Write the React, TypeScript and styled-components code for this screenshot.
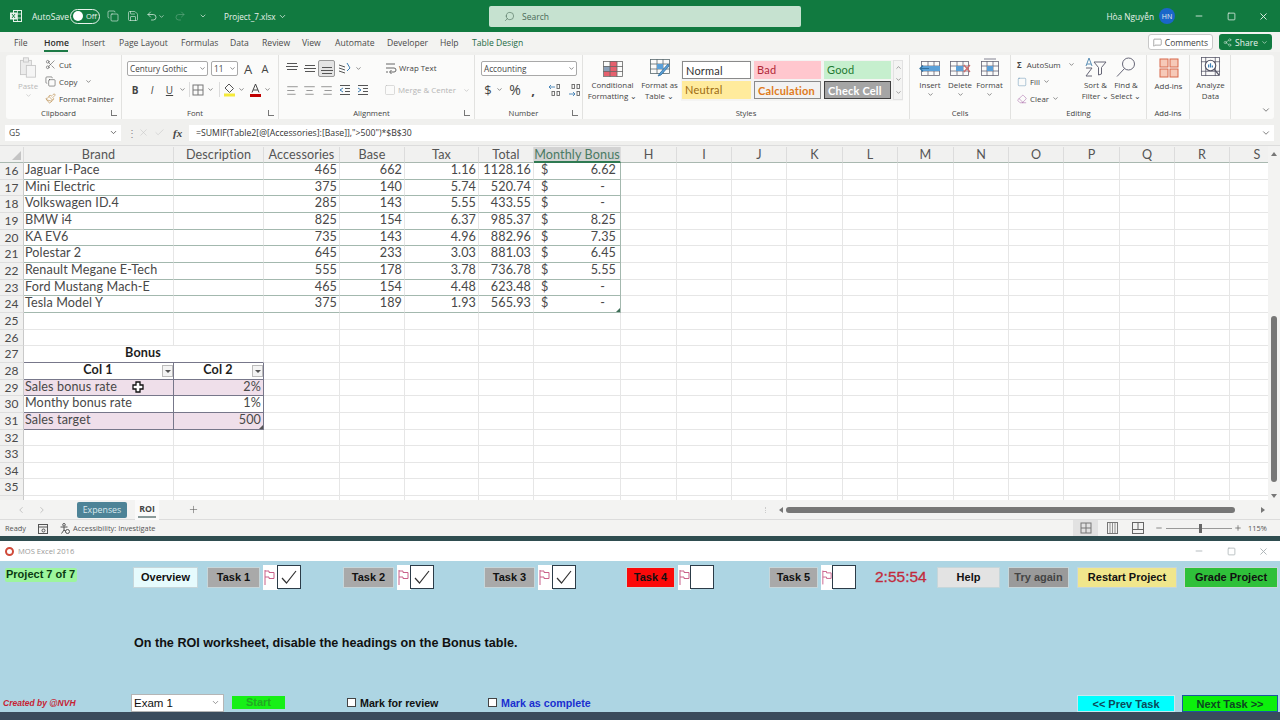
import React from 'react';
import styled, { createGlobalStyle } from 'styled-components';
import {
  AlignCenter,
  AlignLeft,
  AlignRight,
  Check,
  ChevronDown,
  ChevronLeft,
  ChevronRight,
  Copy,
  Eraser,
  MessageSquare,
  Minus,
  Paintbrush,
  Plus,
  Redo2,
  Save,
  Scissors,
  Search,
  Share2,
  Square,
  Undo2,
  X,
} from 'lucide-react';

const ui = '"Open Sans", "Noto Sans", sans-serif';
const sheetFont = 'Lato, "Open Sans", sans-serif';
const arial = '"Liberation Sans", Arial, sans-serif';

const GlobalStyle = createGlobalStyle`
  html, body { margin: 0; padding: 0; background: #fff; }
  * { box-sizing: border-box; }
`;

const Page = styled.div`
  width: 1280px;
  height: 720px;
  overflow: hidden;
  display: flex;
  flex-direction: column;
  font-family: ${ui};
  color: #444;
`;

/* title bar */
const TitleBar = styled.div`
  height: 32px;
  flex: none;
  background: #117a40;
  color: #e8f3ec;
  display: flex;
  align-items: center;
  font-size: 8.5px;
  padding-left: 10px;
`;
const AutoSave = styled.span`
  margin-left: 10px;
  width: 38px;
`;
const Toggle = styled.span`
  width: 30px;
  height: 15px;
  border: 1px solid #e8f3ec;
  border-radius: 8px;
  display: flex;
  align-items: center;
  padding-left: 2px;
  gap: 3px;
  font-size: 7.5px;
  &::before {
    content: '';
    width: 10px;
    height: 10px;
    background: #fff;
    border-radius: 50%;
  }
`;
const QatSlot = styled.span<{ $w: number; $dim?: boolean }>`
  width: ${p => p.$w}px;
  flex: none;
  display: flex;
  justify-content: center;
  align-items: center;
  opacity: ${p => (p.$dim ? 0.4 : 1)};
  svg {
    flex: none;
  }
`;
const FileName = styled.span`
  margin-left: 8px;
  width: 265px;
  display: flex;
  align-items: center;
  gap: 2px;
  font-size: 8.2px;
`;
const SearchBox = styled.div`
  width: 312px;
  height: 21px;
  background: #c6e2d0;
  border-radius: 2px;
  color: #4a6a58;
  display: flex;
  align-items: center;
  gap: 7px;
  padding-left: 15px;
  font-size: 8.5px;
`;
const UserName = styled.span`
  margin-left: auto;
  font-size: 8.3px;
`;
const Avatar = styled.span`
  width: 16px;
  height: 16px;
  margin-left: 5px;
  border-radius: 50%;
  background: #1a66c9;
  font-size: 7px;
  display: flex;
  align-items: center;
  justify-content: center;
`;
const WinBtns = styled.span<{ $dark?: boolean }>`
  display: flex;
  align-items: center;
  width: 105px;
  justify-content: space-between;
  padding: 0 11px 0 19px;
  margin-left: ${p => (p.$dark ? 'auto' : '0')};
  color: ${p => (p.$dark ? '#a8b0b3' : '#e8f3ec')};
`;

/* tabs */
const TabBar = styled.div`
  height: 20px;
  flex: none;
  background: #f3f3f1;
  display: flex;
  align-items: center;
  padding-left: 14px;
  font-size: 8.6px;
`;
const Tab = styled.span<{ $active?: boolean; $green?: boolean; $w: number }>`
  width: ${p => p.$w}px;
  height: 20px;
  line-height: 22px;
  position: relative;
  color: ${p => (p.$green ? '#1d6b44' : p.$active ? '#2b2b2b' : '#4a4a4a')};
  font-weight: ${p => (p.$active ? 600 : 400)};
  &::after {
    content: '';
    display: ${p => (p.$active ? 'block' : 'none')};
    position: absolute;
    left: 0;
    bottom: 0;
    width: 24px;
    height: 2px;
    background: #1d7a46;
  }
`;
const CommentsBtn = styled.span`
  margin-left: auto;
  width: 65px;
  height: 16px;
  background: #fff;
  border: 1px solid #c8c8c8;
  border-radius: 3px;
  display: flex;
  align-items: center;
  justify-content: center;
  gap: 3px;
  font-size: 8.5px;
`;
const ShareBtn = styled.span`
  margin: 0 8px 0 6px;
  width: 53px;
  height: 16px;
  background: #117a40;
  color: #e8f3ec;
  border-radius: 3px;
  display: flex;
  align-items: center;
  justify-content: center;
  gap: 3px;
  font-size: 8.5px;
`;

/* ribbon */
const Ribbon = styled.div`
  height: 70px;
  flex: none;
  background: #f0f0ee;
  padding: 3px 6px 3px 6px;
`;
const RibbonCard = styled.div`
  height: 64px;
  background: #fbfbfa;
  border-radius: 3px;
  display: flex;
  position: relative;
`;
const Group = styled.div<{ $w: number; $plain?: boolean }>`
  width: ${p => p.$w}px;
  flex: none;
  display: flex;
  flex-direction: column;
  position: relative;
  border-right: ${p => (p.$plain ? 'none' : '1px solid #e2e2e0')};
`;
const GroupBody = styled.div<{ $pl?: number }>`
  height: 52px;
  display: flex;
  padding-left: ${p => p.$pl ?? 0}px;
`;
const GroupLabel = styled.div<{ $launcher?: boolean }>`
  font-size: 7.7px;
  text-align: center;
  line-height: 12px;
  padding-right: ${p => (p.$launcher ? 10 : 0)}px;
`;
const Launcher = styled.span`
  position: absolute;
  right: 4px;
  bottom: 3px;
  width: 6px;
  height: 6px;
  border-left: 1px solid #777;
  border-bottom: 1px solid #777;
`;
const Stack = styled.div<{ $w?: number; $gap?: number; $pt?: number }>`
  display: flex;
  flex-direction: column;
  width: ${p => (p.$w ? `${p.$w}px` : 'auto')};
  gap: ${p => p.$gap ?? 0}px;
  padding-top: ${p => p.$pt ?? 0}px;
`;
const SmallCmd = styled.div<{ $dim?: boolean }>`
  height: 17.5px;
  display: flex;
  align-items: center;
  gap: 3px;
  font-size: 7.9px;
  white-space: nowrap;
  color: ${p => (p.$dim ? '#b5b5b5' : '#444')};
  svg {
    flex: none;
  }
`;
const ToolRow = styled.div<{ $h?: number; $gap?: number }>`
  display: flex;
  align-items: center;
  height: ${p => p.$h ?? 21}px;
  gap: ${p => p.$gap ?? 0}px;
`;
const ToolIcon = styled.span<{ $w: number; $sel?: boolean; $fs?: number }>`
  width: ${p => p.$w}px;
  height: 17px;
  flex: none;
  display: flex;
  align-items: center;
  justify-content: center;
  font-size: ${p => p.$fs ?? 10}px;
  border: ${p => (p.$sel ? '1px solid #999' : 'none')};
  border-radius: 2px;
  background: ${p => (p.$sel ? '#e4e4e4' : 'transparent')};
`;
const ToolSep = styled.span<{ $ml?: number; $mr?: number }>`
  width: 1px;
  height: 15px;
  flex: none;
  margin: 0 ${p => p.$mr ?? 0}px 0 ${p => p.$ml ?? 0}px;
  background: #dcdcdc;
`;
const Combo = styled.div<{ $w: number }>`
  width: ${p => p.$w}px;
  height: 15px;
  background: #fff;
  border: 1px solid #a9a9a9;
  border-radius: 2px;
  font-size: 8.2px;
  padding: 0 1px 0 2px;
  display: flex;
  align-items: center;
  justify-content: space-between;
`;
const BigCmd = styled.div<{ $w: number; $dim?: boolean; $pt?: number }>`
  width: ${p => p.$w}px;
  flex: none;
  display: flex;
  flex-direction: column;
  align-items: center;
  font-size: 7.9px;
  line-height: 11px;
  text-align: center;
  white-space: nowrap;
  padding-top: ${p => p.$pt ?? 5}px;
  color: ${p => (p.$dim ? '#b9b9b9' : '#444')};
  svg {
    flex: none;
  }
  svg:first-child {
    margin-bottom: 3px;
  }
`;
const Gallery = styled.div`
  width: 222px;
  height: 41px;
  margin-top: 5px;
  margin-left: 4px;
  background: #f4f4f3;
  display: grid;
  grid-template-columns: 72px 70px 70px 10px;
  grid-template-rows: 20px 20px;
  column-gap: 0;
`;
const StyleChip = styled.div<{ $bg: string; $fg: string; $bd?: string; $bold?: boolean }>`
  margin: 1px 2px 1px 1px;
  background: ${p => p.$bg};
  color: ${p => p.$fg};
  border: ${p => (p.$bd ? `1px solid ${p.$bd}` : 'none')};
  font-size: 11px;
  font-weight: ${p => (p.$bold ? 700 : 400)};
  line-height: 17px;
  padding-left: 3px;
  letter-spacing: 0.2px;
  font-family: ${sheetFont};
  white-space: nowrap;
  overflow: hidden;
`;
const GalleryArrows = styled.div`
  grid-column: 4;
  grid-row: 1 / span 2;
  display: flex;
  flex-direction: column;
  justify-content: space-around;
  align-items: center;
  border: 1px solid #e2e2e2;
  color: #666;
`;
const RibbonCollapse = styled.span`
  position: absolute;
  right: 3px;
  bottom: 4px;
  color: #666;
  display: flex;
`;

/* formula bar */
const FormulaBar = styled.div`
  height: 24px;
  flex: none;
  background: #f0f0ee;
  display: flex;
  align-items: center;
  padding: 0 6px 2px 5px;
  border-bottom: 1px solid #dcdcdc;
`;
const NameBox = styled.div`
  width: 116px;
  height: 16px;
  background: #fff;
  display: flex;
  align-items: center;
  justify-content: space-between;
  padding: 0 3px 0 4px;
  font-size: 8.5px;
`;
const FormulaBtns = styled.div`
  width: 68px;
  display: flex;
  align-items: center;
  padding-left: 6px;
  gap: 5px;
  color: #c4c4c4;
`;
const Dots = styled.span`
  width: 6px;
  font-size: 10px;
  color: #888;
`;
const Fx = styled.span`
  font-family: "Liberation Serif", serif;
  font-style: italic;
  font-weight: 700;
  font-size: 11px;
  color: #444;
  margin-left: 3px;
`;
const FormulaInput = styled.div`
  flex: 1;
  height: 16px;
  background: #fff;
  display: flex;
  align-items: center;
  justify-content: space-between;
  padding: 0 3px 0 7px;
  font-size: 8.7px;
  color: #333;
`;

/* sheet */
const COLS = [24, 150, 90, 76, 65, 74, 55, 87, 56, 55, 55, 56, 55, 56, 55, 55, 56, 55, 55, 55];
const TEMPLATE = COLS.map(c => `${c}px`).join(' ');
const LETTERS = ['H', 'I', 'J', 'K', 'L', 'M', 'N', 'O', 'P', 'Q', 'R', 'S'];

const SheetArea = styled.div`
  height: 354px;
  flex: none;
  display: flex;
  background: #fff;
  overflow: hidden;
`;
const Grid = styled.div`
  width: 1268px;
  flex: none;
  overflow: hidden;
  font-family: ${sheetFont};
  font-size: 12.6px;
  letter-spacing: 0.12px;
  color: #484848;
`;
const Row = styled.div<{ $head?: boolean }>`
  display: grid;
  grid-template-columns: ${TEMPLATE};
  height: ${p => (p.$head ? '17px' : '16.67px')};
  ${p => (p.$head ? 'padding-top: 1px; background: #f1f1f0;' : '')}
`;
const HeadCell = styled.div<{ $sel?: boolean }>`
  text-align: center;
  line-height: 15px;
  color: ${p => (p.$sel ? '#4a7a63' : '#555')};
  background: ${p => (p.$sel ? '#d3d3d3' : '#f1f1f0')};
  border-right: 1px solid #dcdcdc;
  border-bottom: ${p => (p.$sel ? '2px solid #2f7a52' : '1px solid #a9b8b0')};
  white-space: nowrap;
  overflow: hidden;
`;
const Corner = styled(HeadCell)`
  position: relative;
  &::after {
    content: '';
    position: absolute;
    right: 2px;
    bottom: 2px;
    border-left: 9px solid transparent;
    border-bottom: 9px solid #c4c4c4;
  }
`;
const RowNo = styled.div`
  background: #f1f1f0;
  text-align: center;
  line-height: 15.5px;
  color: #4a4a4a;
  border-right: 1px solid #c9c9c9;
  border-bottom: 1px solid #dedede;
  font-size: 12px;
`;
const Cell = styled.div<{
  $right?: boolean;
  $line?: string;
  $fill?: string;
  $bold?: boolean;
  $center?: boolean;
  $span?: number;
  $edge?: string;
}>`
  position: relative;
  line-height: 14.5px;
  padding: 0 2px 0 1px;
  white-space: nowrap;
  text-align: ${p => (p.$center ? 'center' : p.$right ? 'right' : 'left')};
  font-weight: ${p => (p.$bold ? 700 : 400)};
  color: ${p => (p.$bold ? '#1d1d1d' : 'inherit')};
  background: ${p => p.$fill ?? 'transparent'};
  border-bottom: 1px solid ${p => p.$line ?? '#e6e6e6'};
  border-right: 1px solid ${p => p.$edge ?? '#e6e6e6'};
  ${p => (p.$span ? `grid-column: span ${p.$span};` : '')}
`;
const Accounting = styled(Cell)`
  display: flex;
  justify-content: space-between;
  padding: 0 4px 0 7px;
`;
const DashValue = styled.span`
  padding-right: 11px;
`;
const ResizeGrip = styled.span<{ $color: string }>`
  position: absolute;
  right: 0;
  bottom: 0;
  border-left: 4px solid transparent;
  border-bottom: 4px solid ${p => p.$color};
`;
const FilterBtn = styled.span`
  position: absolute;
  right: 0;
  top: 2px;
  width: 11px;
  height: 12px;
  background: #f4f4f4;
  border: 1px solid #bbb;
  &::after {
    content: '';
    position: absolute;
    left: 2px;
    top: 4px;
    border-left: 3px solid transparent;
    border-right: 3px solid transparent;
    border-top: 3px solid #555;
  }
`;
const Pointer = styled.svg`
  position: absolute;
  left: 108px;
  top: 1px;
`;
const VScroll = styled.div`
  flex: 1;
  background: #f3f3f2;
  display: flex;
  flex-direction: column;
  align-items: center;
  padding-top: 6px;
  color: #666;
`;
const ArrowUp = styled.span`
  border-left: 3px solid transparent;
  border-right: 3px solid transparent;
  border-bottom: 4px solid #777;
`;
const ArrowDown = styled.span`
  margin-top: 12px;
  border-left: 3px solid transparent;
  border-right: 3px solid transparent;
  border-top: 4px solid #777;
`;
const VThumb = styled.div`
  width: 6px;
  height: 166px;
  margin-top: 160px;
  background: #777;
  border-radius: 3px;
`;

/* sheet tabs */
const SheetTabs = styled.div`
  height: 20px;
  flex: none;
  background: #f3f3f2;
  display: flex;
  align-items: center;
  font-size: 8.8px;
  border-bottom: 1px solid #dcdcdc;
  color: #bbb;
  padding-left: 16px;
`;
const TabNav = styled.span`
  width: 21px;
  display: flex;
`;
const ExpensesTab = styled.span`
  margin-left: 19px;
  width: 50px;
  height: 16px;
  background: #4d8397;
  color: #dbe9ee;
  border-radius: 2px;
  display: flex;
  align-items: center;
  justify-content: center;
`;
const RoiTab = styled.span`
  margin-left: 8px;
  width: 24px;
  height: 20px;
  background: #fafafa;
  color: #444;
  font-weight: 700;
  text-align: center;
  line-height: 18px;
  position: relative;
  &::after {
    content: '';
    position: absolute;
    left: 3px;
    right: 3px;
    bottom: 2px;
    height: 2px;
    background: #8a9a9a;
  }
`;
const AddTab = styled.span`
  margin-left: 29px;
  color: #555;
  display: flex;
  width: 577px;
`;
const HScroll = styled.div`
  flex: 1;
  display: flex;
  align-items: center;
  border-left: 1px dotted #ccc;
  padding: 0 15px 0 13px;
  gap: 3px;
`;
const HArrow = styled.span<{ $right?: boolean }>`
  border-top: 3px solid transparent;
  border-bottom: 3px solid transparent;
  ${p => (p.$right ? 'border-left: 4px solid #777; margin-left: 23px;' : 'border-right: 4px solid #777;')}
`;
const HThumb = styled.span`
  flex: 1;
  height: 6px;
  background: #777;
  border-radius: 3px;
`;

/* status bar */
const StatusBar = styled.div`
  height: 16px;
  flex: none;
  background: #f3f3f2;
  display: flex;
  align-items: center;
  font-size: 7.4px;
  padding-left: 5px;
  color: #555;
  svg {
    flex: none;
  }
`;
const StatusText = styled.span<{ $w: number }>`
  width: ${p => p.$w}px;
  display: flex;
  align-items: center;
  gap: 3px;
`;
const ViewBtn = styled.span<{ $sel?: boolean; $ml?: number }>`
  width: 25px;
  height: 16px;
  margin-left: ${p => p.$ml ?? 0}px;
  display: flex;
  align-items: center;
  justify-content: center;
  background: ${p => (p.$sel ? '#e2e2e2' : 'transparent')};
`;
const ZoomOut = styled.span`
  margin-left: 5px;
  display: flex;
`;
const ZoomIn = styled.span`
  margin-left: 2px;
  display: flex;
`;
const ZoomSlider = styled.span`
  margin-left: 3px;
  width: 66px;
  height: 1px;
  background: #999;
  position: relative;
  &::after {
    content: '';
    position: absolute;
    left: 33px;
    top: -4px;
    width: 3px;
    height: 9px;
    background: #666;
  }
`;
const ZoomPct = styled.span`
  margin-left: 6px;
`;
const DarkStrip = styled.div<{ $h: number; $c: string }>`
  height: ${p => p.$h}px;
  flex: none;
  background: ${p => p.$c};
`;

/* exam panel */
const ExamTitle = styled.div`
  height: 20px;
  flex: none;
  background: #fff;
  display: flex;
  align-items: center;
  font-size: 7.6px;
  color: #9a9a9a;
  padding-left: 5px;
  gap: 4px;
`;
const ExamLogo = styled.span`
  width: 9px;
  height: 9px;
  border: 2px solid #d04a3a;
  border-radius: 50%;
`;
const ExamPanel = styled.div`
  flex: 1;
  background: #add5e3;
  display: flex;
  flex-direction: column;
  font-family: ${arial};
  font-weight: 700;
  color: #111;
  font-size: 11px;
`;
const TopRow = styled.div`
  height: 31px;
  display: flex;
  align-items: flex-start;
  padding-top: 4px;
`;
const ProjectTag = styled.div`
  width: 72px;
  height: 14px;
  margin: 3px 0 0 5px;
  background: #9df59d;
  color: #0b3b12;
  line-height: 13px;
  padding-left: 1px;
  white-space: nowrap;
  border-radius: 2px;
`;
const PanelBtn = styled.div<{ $w: number; $ml: number; $bg: string; $fg?: string; $mt?: number; $h?: number }>`
  width: ${p => p.$w}px;
  height: ${p => p.$h ?? 21}px;
  margin-left: ${p => p.$ml}px;
  margin-top: ${p => p.$mt ?? 2}px;
  padding-bottom: 2px;
  flex: none;
  background: ${p => p.$bg};
  color: ${p => p.$fg ?? '#111'};
  border: 1.5px solid #c6d6da;
  display: flex;
  align-items: center;
  justify-content: center;
  white-space: nowrap;
`;
const FlagBox = styled.div<{ $w: number }>`
  width: ${p => p.$w}px;
  height: 25px;
  margin-left: 3px;
  flex: none;
  background: #fff;
  display: flex;
  align-items: center;
`;
const CheckBox = styled.div`
  width: 24px;
  height: 24px;
  flex: none;
  background: #fff;
  border: 1.5px solid #2c3c48;
  margin-left: -1px;
  display: flex;
  align-items: center;
  justify-content: center;
  color: #333;
`;
const Timer = styled.div`
  margin-left: 19px;
  width: 53px;
  margin-top: 3px;
  color: #c22a3c;
  font-size: 15.5px;
  font-weight: 400;
  -webkit-text-stroke: 0.3px #c22a3c;
  white-space: nowrap;
`;
const Instruction = styled.div`
  margin: 42px 0 0 134px;
  height: 18px;
  font-size: 12.6px;
  line-height: 18px;
  white-space: nowrap;
`;
const FooterRow = styled.div`
  margin-top: auto;
  height: 19px;
  display: flex;
  align-items: center;
`;
const Credit = styled.span`
  width: 131px;
  padding-left: 3px;
  font-size: 8.5px;
  font-style: italic;
  color: #c62333;
`;
const ExamSelect = styled.div`
  width: 93px;
  height: 18px;
  background: #fff;
  border: 1px solid #b5b5b5;
  display: flex;
  align-items: center;
  justify-content: space-between;
  padding: 0 3px 0 2px;
  font-weight: 400;
  font-size: 11.5px;
  color: #111;
`;
const StartBtn = styled.div`
  margin-left: 8px;
  width: 53px;
  height: 13px;
  background: #17f017;
  color: #23a823;
  text-align: center;
  line-height: 13px;
`;
const MarkBox = styled.span`
  width: 9px;
  height: 9px;
  flex: none;
  background: #fff;
  border: 1px solid #444;
  margin-right: 4px;
`;
const Mark = styled.span<{ $ml: number; $w: number; $blue?: boolean }>`
  margin-left: ${p => p.$ml}px;
  width: ${p => p.$w}px;
  display: flex;
  align-items: center;
  white-space: nowrap;
  color: ${p => (p.$blue ? '#1a2fd0' : '#111')};
  font-size: 10.7px;
`;
const NavBtn = styled.div<{ $ml: number; $w: number; $bg: string; $bd: string; $fg: string }>`
  margin-left: ${p => p.$ml}px;
  width: ${p => p.$w}px;
  height: 17px;
  margin-top: 2px;
  background: ${p => p.$bg};
  border: 1px solid ${p => p.$bd};
  color: ${p => p.$fg};
  text-align: center;
  line-height: 16px;
`;

const ExcelIcon = () => (
  <svg width="12" height="12" viewBox="0 0 12 12" fill="none">
    <rect x="3.5" y="0.5" width="8" height="11" stroke="#e8f3ec" />
    <path d="M7.5 1v10M4 4h7M4 8h7" stroke="#e8f3ec" strokeWidth="0.8" />
    <rect x="0" y="2.5" width="7" height="7" fill="#e8f3ec" />
    <path d="M2 4l3 4M5 4L2 8" stroke="#117a40" strokeWidth="0.9" />
  </svg>
);

const Hamburger = ({ rows }: { rows: Array<[number, number]> }) => (
  <svg width="14" height="14" viewBox="0 0 14 14" fill="none" stroke="#555" strokeWidth="1">
    {rows.map(([x, y]) => (
      <path key={y} d={`M${x} ${y + 0.5}h${14 - 2 * x}`} />
    ))}
  </svg>
);

const IndentIcon = ({ flip }: { flip?: boolean }) => (
  <svg width="14" height="14" viewBox="0 0 14 14" fill="none" stroke="#555" strokeWidth="1">
    <path d="M2 2.5h10M7 5.5h5M7 8.5h5M2 11.5h10" />
    <path d={flip ? 'M5 5L2 7l3 2' : 'M2 5l3 2-3 2'} stroke="#3f7fb5" />
  </svg>
);

const CondIcon = () => (
  <svg width="20" height="16" viewBox="0 0 20 16" fill="none" stroke="#666" strokeWidth="0.8">
    <rect x="7" y="0" width="7" height="6" fill="#e5606d" stroke="none" />
    <rect x="7" y="5" width="7" height="5" fill="#e5606d" stroke="none" />
    <rect x="1" y="10" width="13" height="5" fill="#e5606d" stroke="none" />
    <rect x="1" y="5" width="6" height="5" fill="#8aa0b8" stroke="none" />
    <rect x="0.5" y="0.5" width="19" height="15" />
    <path d="M7 0v16M14 0v16M0 5.5h20M0 10.5h20" />
  </svg>
);

const FormatTableIcon = () => (
  <svg width="20" height="18" viewBox="0 0 20 18" fill="none" stroke="#5a6a70" strokeWidth="0.8">
    <rect x="0.5" y="0.5" width="19" height="14" />
    <path d="M0 5h20M0 10h20M7 0v15M13 0v15" />
    <rect x="7" y="5" width="6" height="5" fill="#5ba0d8" stroke="none" />
    <path d="M18 5l-8 9-2 3 3-1 8-9z" fill="#5ba0d8" stroke="#2f6f9f" />
  </svg>
);

const InsertIcon = () => (
  <svg width="22" height="17" viewBox="0 0 22 17" fill="none" stroke="#667" strokeWidth="0.8">
    <rect x="2.5" y="1.5" width="18" height="14" />
    <path d="M2 6h19M2 11h19M9 1v14M15 1v14" />
    <rect x="2" y="6" width="19" height="5" fill="#5ba0d8" stroke="none" />
    <path d="M10 8.5H1M4 5.5l-3 3 3 3" stroke="#2f6f9f" strokeWidth="1.2" />
  </svg>
);

const DeleteIcon = () => (
  <svg width="22" height="17" viewBox="0 0 22 17" fill="none" stroke="#667" strokeWidth="0.8">
    <rect x="1.5" y="1.5" width="18" height="14" />
    <path d="M1 6h19M1 11h19M8 1v14M14 1v14" />
    <rect x="7" y="6" width="7" height="5" fill="#5ba0d8" stroke="none" />
    <path d="M15 5l6 7M21 5l-6 7" stroke="#d06a6a" strokeWidth="1.2" />
  </svg>
);

const FormatIcon = () => (
  <svg width="20" height="19" viewBox="0 0 20 19" fill="none" stroke="#667" strokeWidth="0.8">
    <path d="M4 1h12" />
    <rect x="1.5" y="3.5" width="17" height="14" />
    <path d="M1 8h18M1 13h18M7 3v15M13 3v15" />
    <rect x="7" y="8" width="6" height="5" fill="#5ba0d8" stroke="none" />
  </svg>
);

const SortIcon = () => (
  <svg width="22" height="20" viewBox="0 0 22 20" fill="none" stroke="#667">
    <path d="M1 11h6l-6 8h6" />
    <path d="M1 9l3-8 3 8M2 7h4" stroke="#5a8fb5" />
    <path d="M9 5h12l-4.500 5.500V17l-3 1v-7.500z" />
  </svg>
);

const FindIcon = () => (
  <svg width="20" height="20" viewBox="0 0 20 20" fill="none" stroke="#667">
    <circle cx="12.500" cy="7" r="6" />
    <path d="M8.500 11.500L1 19.500" />
  </svg>
);

const AddinsIcon = () => (
  <svg width="20" height="20" viewBox="0 0 20 20" fill="#f6c9b8" stroke="#d8694a">
    <rect x="1" y="1" width="8" height="8" />
    <rect x="11" y="1" width="8" height="8" />
    <rect x="1" y="11" width="8" height="8" />
    <rect x="11" y="11" width="8" height="8" />
  </svg>
);

const AnalyzeIcon = () => (
  <svg width="21" height="21" viewBox="0 0 22 22" fill="none" stroke="#556" strokeWidth="0.8">
    <rect x="1.5" y="1.5" width="19" height="19" />
    <path d="M1 6h20M1 16h20M6 1v20M16 1v20" />
    <circle cx="11" cy="10" r="5.5" fill="#fff" strokeWidth="1.2" />
    <path d="M9 12V9M11 12V7.500M13 12v-2" stroke="#3f7fb5" strokeWidth="1.3" />
    <path d="M15 14l5 6" strokeWidth="1.4" />
  </svg>
);

const PasteIcon = () => (
  <svg width="20" height="21" viewBox="0 0 20 25" fill="#ececec" stroke="#c4c4c4">
    <rect x="1" y="4" width="13" height="17" />
    <rect x="4.5" y="1" width="6" height="5" />
    <rect x="8" y="10" width="11" height="14" fill="#f5f5f5" />
  </svg>
);

const BorderIcon = () => (
  <svg width="12" height="12" viewBox="0 0 12 12" fill="none" stroke="#777">
    <rect x="1" y="1" width="10" height="10" />
    <path d="M6 1v10M1 6h10" />
  </svg>
);

const FillIcon = () => (
  <svg width="13" height="14" viewBox="0 0 13 14" fill="none" stroke="#555">
    <path d="M6 1l4.500 4.500L6.500 9.500 2 5z" />
    <rect x="1" y="10.5" width="11" height="3" fill="#f5ea3a" stroke="none" />
  </svg>
);

const FontColorIcon = () => (
  <svg width="13" height="14" viewBox="0 0 13 14" fill="none" stroke="#444">
    <path d="M3 9.500L6.500 1 10 9.500M4.200 7h4.600" />
    <rect x="1" y="11" width="11" height="3" fill="#c00000" stroke="none" />
  </svg>
);

const OrientIcon = () => (
  <svg width="14" height="14" viewBox="0 0 14 14" fill="none" stroke="#555">
    <path d="M2 4l6 2M2 7l6 2M2 10l6 2" />
    <path d="M10 2l3 5-3 3" stroke="#3f7fb5" />
  </svg>
);

const WrapIcon = () => (
  <svg width="13" height="14" viewBox="0 0 13 14" fill="none" stroke="#666">
    <path d="M2 3h9M2 7h8a2 2 0 010 4H6M7.500 9l-2 2 2 2M2 11h2" />
  </svg>
);

const DecimalIcon = ({ flip }: { flip?: boolean }) => (
  <svg width="16" height="14" viewBox="0 0 16 14" fill="none" stroke="#666" strokeWidth="0.9">
    <path d={flip ? 'M2 11h6M6 9l2 2-2 2' : 'M8 4H2M4 2L2 4l2 2'} stroke="#3f7fb5" />
    <rect x="10" y="1.5" width="2.5" height="4" />
    <rect x="10" y="8.5" width="2.5" height="4" />
    <rect x="5" y={flip ? 1.5 : 8.5} width="2.5" height="4" />
  </svg>
);

const MacroIcon = () => (
  <svg width="10" height="11" viewBox="0 0 10 11" fill="none" stroke="#555">
    <rect x="0.5" y="1.500" width="9" height="9" />
    <path d="M0 4h10" />
    <circle cx="5.500" cy="7.500" r="1.500" />
  </svg>
);

const A11yIcon = () => (
  <svg width="10" height="11" viewBox="0 0 10 11" fill="none" stroke="#555">
    <circle cx="4" cy="1.800" r="1.300" />
    <path d="M0.500 4h7M4 4v3L1.500 10.500M4 7l2 1.500" />
    <circle cx="7.500" cy="8.500" r="2" />
  </svg>
);

const PageViewIcon = () => (
  <svg width="11" height="12" viewBox="0 0 11 12" fill="none" stroke="#777">
    <rect x="0.500" y="0.500" width="10" height="11" />
    <path d="M3 1v10M5.500 1v10M8 1v10" strokeWidth="0.8" />
  </svg>
);

const BreakViewIcon = () => (
  <svg width="12" height="12" viewBox="0 0 12 12" fill="none" stroke="#666">
    <rect x="0.500" y="0.500" width="11" height="11" />
    <path d="M6 1v6M1 7.500h10" />
  </svg>
);

const FlagGlyph = () => (
  <svg width="13" height="17" viewBox="0 0 13 17" fill="none" stroke="#c9608a">
    <path d="M2 1v15M2 2h4v1.500h5v6H6V8H2" />
  </svg>
);

const TickMark = () => (
  <svg width="18" height="16" viewBox="0 0 18 16" fill="none" stroke="#333" strokeWidth="1.2">
    <path d="M2 9l4.500 5L16 2" />
  </svg>
);

const Chev = ({ s = 8, c = 'currentColor' }: { s?: number; c?: string }) => <ChevronDown size={s} color={c} />;

const brands: Array<[number, string, number, number, string, string, string]> = [
  [16, 'Jaguar I-Pace', 465, 662, '1.16', '1128.16', '6.62'],
  [17, 'Mini Electric', 375, 140, '5.74', '520.74', '-'],
  [18, 'Volkswagen ID.4', 285, 143, '5.55', '433.55', '-'],
  [19, 'BMW i4', 825, 154, '6.37', '985.37', '8.25'],
  [20, 'KA EV6', 735, 143, '4.96', '882.96', '7.35'],
  [21, 'Polestar 2', 645, 233, '3.03', '881.03', '6.45'],
  [22, 'Renault Megane E-Tech', 555, 178, '3.78', '736.78', '5.55'],
  [23, 'Ford Mustang Mach-E', 465, 154, '4.48', '623.48', '-'],
  [24, 'Tesla Model Y', 375, 189, '1.93', '565.93', '-'],
];

const TABLE_LINE = '#a3b8ae';
const BONUS_LINE = '#77778a';
const BONUS_FILL = '#efdfea';

const blanks = (from: number) =>
  COLS.slice(from).map((_, i) => <Cell key={`b${from + i}`} />);

function Sheet() {
  return (
    <Grid>
      <Row $head>
        <Corner />
        {['Brand', 'Description', 'Accessories', 'Base', 'Tax', 'Total'].map(h => (
          <HeadCell key={h}>{h}</HeadCell>
        ))}
        <HeadCell $sel>Monthly Bonus</HeadCell>
        {LETTERS.map(l => (
          <HeadCell key={l}>{l}</HeadCell>
        ))}
      </Row>
      {brands.map(([n, name, acc, base, tax, total, bonus]) => (
        <Row key={n}>
          <RowNo>{n}</RowNo>
          <Cell $line={TABLE_LINE}>{name}</Cell>
          <Cell $line={TABLE_LINE} />
          <Cell $line={TABLE_LINE} $right>{acc}</Cell>
          <Cell $line={TABLE_LINE} $right>{base}</Cell>
          <Cell $line={TABLE_LINE} $right>{tax}</Cell>
          <Cell $line={TABLE_LINE} $right>{total}</Cell>
          <Accounting $line={TABLE_LINE} $edge={TABLE_LINE}>
            <span>$</span>
            {bonus === '-' ? <DashValue>-</DashValue> : <span>{bonus}</span>}
            {n === 24 && <ResizeGrip $color="#3c6e57" />}
          </Accounting>
          {blanks(8)}
        </Row>
      ))}
      <Row>
        <RowNo>25</RowNo>
        {blanks(1)}
      </Row>
      <Row>
        <RowNo>26</RowNo>
        {blanks(1)}
      </Row>
      <Row>
        <RowNo>27</RowNo>
        <Cell $span={2} $center $bold $line={BONUS_LINE}>Bonus</Cell>
        {blanks(3)}
      </Row>
      <Row>
        <RowNo>28</RowNo>
        <Cell $center $bold $line={BONUS_LINE} $edge={BONUS_LINE}>
          Col 1
          <FilterBtn />
        </Cell>
        <Cell $center $bold $line={BONUS_LINE} $edge={BONUS_LINE}>
          Col 2
          <FilterBtn />
        </Cell>
        {blanks(3)}
      </Row>
      <Row>
        <RowNo>29</RowNo>
        <Cell $fill={BONUS_FILL} $line={BONUS_LINE} $edge={BONUS_LINE}>
          Sales bonus rate
          <Pointer width="12" height="12" viewBox="0 0 12 12" fill="#fff" stroke="#111" strokeWidth="1.3">
            <path d="M4 1h4v3h3v4H8v3H4V8H1V4h3z" />
          </Pointer>
        </Cell>
        <Cell $fill={BONUS_FILL} $line={BONUS_LINE} $edge={BONUS_LINE} $right>2%</Cell>
        {blanks(3)}
      </Row>
      <Row>
        <RowNo>30</RowNo>
        <Cell $line={BONUS_LINE} $edge={BONUS_LINE}>Monthy bonus rate</Cell>
        <Cell $line={BONUS_LINE} $edge={BONUS_LINE} $right>1%</Cell>
        {blanks(3)}
      </Row>
      <Row>
        <RowNo>31</RowNo>
        <Cell $fill={BONUS_FILL} $line={BONUS_LINE} $edge={BONUS_LINE}>Sales target</Cell>
        <Cell $fill={BONUS_FILL} $line={BONUS_LINE} $edge={BONUS_LINE} $right>
          500
          <ResizeGrip $color="#555" />
        </Cell>
        {blanks(3)}
      </Row>
      {[32, 33, 34, 35, 36].map(n => (
        <Row key={n}>
          <RowNo>{n}</RowNo>
          {blanks(1)}
        </Row>
      ))}
    </Grid>
  );
}

function RibbonBar() {
  return (
    <Ribbon>
      <RibbonCard>
        <Group $w={116}>
          <GroupBody $pl={5}>
            <BigCmd $w={34} $dim $pt={2}>
              <PasteIcon />
              Paste
              <Chev s={7} />
            </BigCmd>
            <Stack $pt={1}>
              <SmallCmd><Scissors size={11} strokeWidth={1.2} />Cut</SmallCmd>
              <SmallCmd><Copy size={11} strokeWidth={1.2} />Copy&nbsp;&nbsp;<Chev s={7} /></SmallCmd>
              <SmallCmd><Paintbrush size={11} strokeWidth={1.2} color="#b07a30" />Format Painter</SmallCmd>
            </Stack>
          </GroupBody>
          <GroupLabel $launcher>Clipboard</GroupLabel>
          <Launcher />
        </Group>
        <Group $w={157}>
          <GroupBody $pl={5}>
            <Stack $pt={6}>
              <ToolRow $h={15} $gap={3}>
                <Combo $w={81}>Century Gothic<Chev s={7} /></Combo>
                <Combo $w={27}>11<Chev s={7} /></Combo>
                <ToolIcon $w={14} $fs={13}>A</ToolIcon>
                <ToolIcon $w={14} $fs={11}>A</ToolIcon>
              </ToolRow>
              <ToolRow $h={27}>
                <ToolIcon $w={16}><b>B</b></ToolIcon>
                <ToolIcon $w={18}><i>I</i></ToolIcon>
                <ToolIcon $w={17}><u>U</u></ToolIcon>
                <ToolIcon $w={8}><Chev s={7} /></ToolIcon>
                <ToolSep $ml={3} />
                <ToolIcon $w={16}><BorderIcon /></ToolIcon>
                <ToolIcon $w={9}><Chev s={7} /></ToolIcon>
                <ToolSep $ml={4} $mr={2} />
                <ToolIcon $w={15}><FillIcon /></ToolIcon>
                <ToolIcon $w={8}><Chev s={7} /></ToolIcon>
                <ToolIcon $w={2} />
                <ToolIcon $w={16}><FontColorIcon /></ToolIcon>
                <ToolIcon $w={9}><Chev s={7} /></ToolIcon>
              </ToolRow>
            </Stack>
          </GroupBody>
          <GroupLabel $launcher>Font</GroupLabel>
          <Launcher />
        </Group>
        <Group $w={196}>
          <GroupBody $pl={0}>
            <Stack $w={105} $pt={4}>
              <ToolRow $h={18}>
                <ToolIcon $w={4} />
                <ToolIcon $w={18}><Hamburger rows={[[2, 2], [1, 5], [2, 8]]} /></ToolIcon>
                <ToolIcon $w={17}><Hamburger rows={[[2, 4], [1, 7], [2, 10]]} /></ToolIcon>
                <ToolIcon $w={17} $sel><Hamburger rows={[[2, 6], [1, 9], [2, 12]]} /></ToolIcon>
                <ToolIcon $w={18}><OrientIcon /></ToolIcon>
                <ToolIcon $w={10}><Chev s={7} /></ToolIcon>
              </ToolRow>
              <ToolRow $h={26}>
                <ToolIcon $w={4} />
                <ToolIcon $w={18}><AlignLeft size={13} strokeWidth={1} /></ToolIcon>
                <ToolIcon $w={17}><AlignCenter size={13} strokeWidth={1} /></ToolIcon>
                <ToolIcon $w={17}><AlignRight size={13} strokeWidth={1} /></ToolIcon>
                <ToolIcon $w={19}><IndentIcon flip /></ToolIcon>
                <ToolIcon $w={18}><IndentIcon /></ToolIcon>
              </ToolRow>
            </Stack>
            <Stack $pt={4}>
              <ToolRow $h={18} $gap={2}>
                <WrapIcon />
                <SmallCmd>Wrap Text</SmallCmd>
              </ToolRow>
              <ToolRow $h={26} $gap={2}>
                <Square size={12} color="#bbb" strokeWidth={1} />
                <SmallCmd $dim>Merge &amp; Center&nbsp;&nbsp;<Chev s={7} /></SmallCmd>
              </ToolRow>
            </Stack>
          </GroupBody>
          <GroupLabel $launcher>Alignment</GroupLabel>
          <Launcher />
        </Group>
        <Group $w={108}>
          <GroupBody $pl={6}>
            <Stack $pt={6}>
              <Combo $w={96}>Accounting<Chev s={7} /></Combo>
              <ToolRow $h={27}>
                <ToolIcon $w={14} $fs={13}>$</ToolIcon>
                <ToolIcon $w={8}><Chev s={7} /></ToolIcon>
                <ToolIcon $w={24} $fs={14}>%</ToolIcon>
                <ToolIcon $w={12} $fs={13}><b>,</b></ToolIcon>
                <ToolIcon $w={5} />
                <ToolIcon $w={22}><DecimalIcon /></ToolIcon>
                <ToolIcon $w={18}><DecimalIcon flip /></ToolIcon>
              </ToolRow>
            </Stack>
          </GroupBody>
          <GroupLabel $launcher>Number</GroupLabel>
          <Launcher />
        </Group>
        <Group $w={327}>
          <GroupBody>
            <BigCmd $w={59} $pt={6}>
              <CondIcon />
              Conditional
              <br />
              Formatting ⌄
            </BigCmd>
            <BigCmd $w={35} $pt={4}>
              <FormatTableIcon />
              Format as
              <br />
              Table ⌄
            </BigCmd>
            <Gallery>
              <StyleChip $bg="#fff" $fg="#333" $bd="#8a8a8a">Normal</StyleChip>
              <StyleChip $bg="#ffc7ce" $fg="#b02838">Bad</StyleChip>
              <StyleChip $bg="#c6efce" $fg="#1f7a32">Good</StyleChip>
              <StyleChip $bg="#ffeb9c" $fg="#9c6a10">Neutral</StyleChip>
              <StyleChip $bg="#f2f2f2" $fg="#e07a20" $bd="#8a8a8a" $bold>Calculation</StyleChip>
              <StyleChip $bg="#a5a5a5" $fg="#fff" $bd="#3f3f3f" $bold>Check Cell</StyleChip>
              <GalleryArrows>
                <ChevronDown size={7} style={{ transform: 'rotate(180deg)' }} />
                <Chev s={7} />
                <Chev s={7} />
              </GalleryArrows>
            </Gallery>
          </GroupBody>
          <GroupLabel>Styles</GroupLabel>
        </Group>
        <Group $w={101}>
          <GroupBody $pl={5}>
            <BigCmd $w={30} $pt={5}><InsertIcon />Insert<Chev s={7} /></BigCmd>
            <BigCmd $w={30} $pt={5}><DeleteIcon />Delete<Chev s={7} /></BigCmd>
            <BigCmd $w={29} $pt={3}><FormatIcon />Format<Chev s={7} /></BigCmd>
          </GroupBody>
          <GroupLabel>Cells</GroupLabel>
        </Group>
        <Group $w={136}>
          <GroupBody $pl={6}>
            <Stack $w={62} $pt={1}>
              <SmallCmd><b>Σ</b>&nbsp;AutoSum&nbsp;&nbsp;<Chev s={7} /></SmallCmd>
              <SmallCmd><Square size={10} strokeWidth={1} color="#4a7fa8" />Fill <Chev s={7} /></SmallCmd>
              <SmallCmd><Eraser size={10} strokeWidth={1.2} color="#a05aa0" />Clear <Chev s={7} /></SmallCmd>
            </Stack>
            <BigCmd $w={33} $pt={2}><SortIcon />Sort &amp;<br />Filter ⌄</BigCmd>
            <BigCmd $w={28} $pt={2}><FindIcon />Find &amp;<br />Select ⌄</BigCmd>
          </GroupBody>
          <GroupLabel>Editing</GroupLabel>
        </Group>
        <Group $w={43}>
          <GroupBody>
            <BigCmd $w={43} $pt={3}><AddinsIcon />Add-ins</BigCmd>
          </GroupBody>
          <GroupLabel>Add-ins</GroupLabel>
        </Group>
        <Group $w={41}>
          <GroupBody>
            <BigCmd $w={41} $pt={1}><AnalyzeIcon />Analyze<br />Data</BigCmd>
          </GroupBody>
        </Group>
        <RibbonCollapse><Chev s={10} /></RibbonCollapse>
      </RibbonCard>
    </Ribbon>
  );
}

const tasks = [
  { label: 'Task 1', ml: 9, w: 53, flag: 15, done: true, red: false },
  { label: 'Task 2', ml: 42, w: 51, flag: 14, done: true, red: false },
  { label: 'Task 3', ml: 50, w: 51, flag: 15, done: true, red: false },
  { label: 'Task 4', ml: 50, w: 49, flag: 13, done: false, red: true },
  { label: 'Task 5', ml: 55, w: 49, flag: 12, done: false, red: false },
];

export default function App() {
  return (
    <Page>
      <GlobalStyle />
      <TitleBar>
        <ExcelIcon />
        <AutoSave>AutoSave</AutoSave>
        <Toggle>Off</Toggle>
        <QatSlot $w={26}><Copy size={12} strokeWidth={1.2} /></QatSlot>
        <QatSlot $w={14}><Save size={12} strokeWidth={1.2} /></QatSlot>
        <QatSlot $w={30}><Undo2 size={12} strokeWidth={1.4} /><Chev s={7} /></QatSlot>
        <QatSlot $w={20} $dim><Redo2 size={12} strokeWidth={1.2} /></QatSlot>
        <QatSlot $w={26}><Chev s={8} /></QatSlot>
        <FileName>Project_7.xlsx <Chev s={9} /></FileName>
        <SearchBox>
          <Search size={11} strokeWidth={1.3} style={{ transform: 'scaleX(-1)' }} />
          Search
        </SearchBox>
        <UserName>Hòa Nguyễn</UserName>
        <Avatar>HN</Avatar>
        <WinBtns>
          <Minus size={10} />
          <Square size={9} />
          <X size={11} />
        </WinBtns>
      </TitleBar>
      <TabBar>
        <Tab $w={30}>File</Tab>
        <Tab $w={38} $active>Home</Tab>
        <Tab $w={37}>Insert</Tab>
        <Tab $w={62}>Page Layout</Tab>
        <Tab $w={49}>Formulas</Tab>
        <Tab $w={32}>Data</Tab>
        <Tab $w={40}>Review</Tab>
        <Tab $w={33}>View</Tab>
        <Tab $w={52}>Automate</Tab>
        <Tab $w={53}>Developer</Tab>
        <Tab $w={32}>Help</Tab>
        <Tab $w={60} $green>Table Design</Tab>
        <CommentsBtn><MessageSquare size={9} strokeWidth={1.2} />Comments</CommentsBtn>
        <ShareBtn><Share2 size={9} strokeWidth={1.2} />Share <Chev s={7} /></ShareBtn>
      </TabBar>
      <RibbonBar />
      <FormulaBar>
        <NameBox>G5<Chev s={9} /></NameBox>
        <FormulaBtns>
          <Dots>⋮</Dots>
          <X size={11} strokeWidth={1.2} />
          <Check size={11} strokeWidth={1.2} />
          <Fx>fx</Fx>
        </FormulaBtns>
        <FormulaInput>
          =SUMIF(Table2[@[Accessories]:[Base]],"&gt;500")*$B$30
          <Chev s={10} c="#666" />
        </FormulaInput>
      </FormulaBar>
      <SheetArea>
        <Sheet />
        <VScroll>
          <ArrowUp />
          <VThumb />
          <ArrowDown />
        </VScroll>
      </SheetArea>
      <SheetTabs>
        <TabNav><ChevronLeft size={10} /></TabNav>
        <TabNav><ChevronRight size={10} /></TabNav>
        <ExpensesTab>Expenses</ExpensesTab>
        <RoiTab>ROI</RoiTab>
        <AddTab><Plus size={11} strokeWidth={1.2} /></AddTab>
        <HScroll>
          <HArrow />
          <HThumb />
          <HArrow $right />
        </HScroll>
      </SheetTabs>
      <StatusBar>
        <StatusText $w={33}>Ready</StatusText>
        <StatusText $w={22}><MacroIcon /></StatusText>
        <StatusText $w={1013}><A11yIcon />Accessibility: Investigate</StatusText>
        <ViewBtn $sel><BorderIcon /></ViewBtn>
        <ViewBtn $ml={2}><PageViewIcon /></ViewBtn>
        <ViewBtn><BreakViewIcon /></ViewBtn>
        <ZoomOut><Minus size={8} /></ZoomOut>
        <ZoomSlider />
        <ZoomIn><Plus size={8} /></ZoomIn>
        <ZoomPct>115%</ZoomPct>
      </StatusBar>
      <DarkStrip $h={5} $c="#2f4d50" />
      <ExamTitle>
        <ExamLogo />
        MOS Excel 2016
        <WinBtns $dark>
          <Minus size={10} />
          <Square size={9} />
          <X size={11} />
        </WinBtns>
      </ExamTitle>
      <ExamPanel>
        <TopRow>
          <ProjectTag>Project 7 of 7</ProjectTag>
          <PanelBtn $w={65} $ml={56} $bg="#e6fbfd">Overview</PanelBtn>
          {tasks.map(t => (
            <React.Fragment key={t.label}>
              <PanelBtn $w={t.w} $ml={t.ml} $bg={t.red ? '#fb0a0a' : '#a9a9a9'}>
                {t.label}
              </PanelBtn>
              <FlagBox $w={t.flag}><FlagGlyph /></FlagBox>
              <CheckBox>{t.done && <TickMark />}</CheckBox>
            </React.Fragment>
          ))}
          <Timer>2:55:54</Timer>
          <PanelBtn $w={63} $ml={9} $bg="#e3e3e3">Help</PanelBtn>
          <PanelBtn $w={61} $ml={8} $bg="#9a9a9a" $fg="#444">Try again</PanelBtn>
          <PanelBtn $w={100} $ml={8} $bg="#f0e68c">Restart Project</PanelBtn>
          <PanelBtn $w={94} $ml={7} $bg="#2fc03a">Grade Project</PanelBtn>
        </TopRow>
        <Instruction>On the ROI worksheet, disable the headings on the Bonus table.</Instruction>
        <FooterRow>
          <Credit>Created by @NVH</Credit>
          <ExamSelect>Exam 1<Chev s={9} c="#777" /></ExamSelect>
          <StartBtn>Start</StartBtn>
          <Mark $ml={62} $w={141}><MarkBox />Mark for review</Mark>
          <Mark $ml={0} $w={110} $blue><MarkBox />Mark as complete</Mark>
          <NavBtn $ml={479} $w={98} $bg="#0ff" $bd="#c6e8ee" $fg="#0b4a5a">&lt;&lt; Prev Task</NavBtn>
          <NavBtn $ml={7} $w={96} $bg="#0cf00c" $bd="#1a5aa0" $fg="#0b4a20">Next Task &gt;&gt;</NavBtn>
        </FooterRow>
      </ExamPanel>
      <DarkStrip $h={8} $c="#3a4b5c" />
    </Page>
  );
}
